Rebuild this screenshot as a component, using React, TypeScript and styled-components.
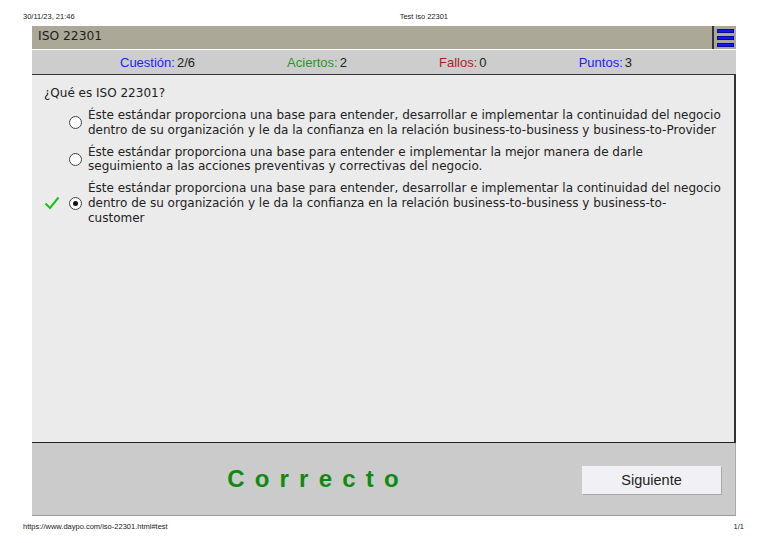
import styled, { createGlobalStyle } from "styled-components";

const GlobalStyle = createGlobalStyle`
  html, body {
    margin: 0;
    padding: 0;
    background: #ffffff;
  }
`;

const Page = styled.div`
  width: 768px;
  height: 543px;
  display: flex;
  flex-direction: column;
  font-family: "DejaVu Sans", Verdana, sans-serif;
  color: #222;
`;

const PrintLine = styled.div<{ $h: number; $top?: number }>`
  height: ${(p) => p.$h}px;
  box-sizing: border-box;
  padding: ${(p) => p.$top ?? 0}px 24px 0 23px;
  display: flex;
  align-items: center;
  justify-content: space-between;
  font-family: "Liberation Sans", Arial, sans-serif;
  font-size: 7.5px;
  color: #222;
`;

const PrintTitle = styled.span`
  margin-right: 296px;
`;

const Sheet = styled.div`
  width: 704px;
  margin-left: 32px;
  display: flex;
  flex-direction: column;
`;

const TitleBar = styled.div`
  height: 23px;
  background: #aba897;
  display: flex;
  align-items: center;
  justify-content: space-between;
`;

const Title = styled.h1`
  margin: 0 0 3px 6px;
  font-size: 12.3px;
  font-weight: normal;
  color: #1e1e1e;
`;

const MenuButton = styled.div`
  height: 23px;
  width: 22px;
  border-left: 2px solid #333;
  display: flex;
  flex-direction: column;
  justify-content: center;
  align-items: center;
  gap: 3px;
`;

const MenuBar = styled.span`
  width: 15px;
  height: 2px;
  background: #1414ff;
  border: 1px solid #0a0a9a;
`;

const StatsBar = styled.div`
  height: 24px;
  margin-top: 1px;
  background: #cdcdcd;
  border-bottom: 1px solid #333;
  display: flex;
  align-items: center;
  justify-content: space-between;
  padding: 0 104px 0 88px;
  font-family: "Liberation Sans", Arial, sans-serif;
  font-size: 13px;
`;

const Stat = styled.span`
  color: #222;
`;

const StatLabel = styled.span<{ $color: string }>`
  color: ${(p) => p.$color};
  margin-right: 2px;
`;

const Content = styled.div`
  height: 368px;
  background: #ebebeb;
  border-right: 2px solid #333;
  border-bottom: 1px solid #222;
  box-sizing: border-box;
  padding: 11px 0 0 12px;
`;

const Question = styled.p`
  margin: 0 0 8px 0;
  font-size: 12px;
`;

const AnswerList = styled.div`
  display: flex;
  flex-direction: column;
  gap: 7px;
`;

const Answer = styled.div`
  display: flex;
  align-items: center;
`;

const Mark = styled.div`
  width: 22px;
  display: flex;
  justify-content: flex-start;
`;

const Radio = styled.span<{ $checked?: boolean }>`
  width: 11px;
  height: 11px;
  border: 1px solid #444;
  border-radius: 50%;
  background: #fff;
  margin: 0 6px 0 3px;
  display: flex;
  align-items: center;
  justify-content: center;
  flex-shrink: 0;
  &::after {
    content: "";
    width: 5px;
    height: 5px;
    border-radius: 50%;
    background: ${(p) => (p.$checked ? "#111" : "transparent")};
  }
`;

const AnswerText = styled.div`
  font-size: 12px;
  line-height: 14.8px;
  width: 640px;
`;

const AnswerLine = styled.span`
  display: block;
  white-space: nowrap;
`;

const BottomBar = styled.div`
  height: 72px;
  background: #cbcbcb;
  border-bottom: 1px solid #9a9a9a;
  border-right: 1px solid #aaa;
  display: flex;
  align-items: center;
`;

const Verdict = styled.div`
  flex: 1;
  text-align: center;
  padding-left: 22px;
  font-family: "Liberation Sans", Arial, sans-serif;
  font-weight: bold;
  font-size: 24px;
  letter-spacing: 10.2px;
  color: #0e8a0e;
`;

const NextButton = styled.button`
  width: 139px;
  height: 28px;
  margin-right: 14px;
  margin-top: 2px;
  background: #f1f1f5;
  border: none;
  box-shadow: 1px 1px 0 #a8a8a8;
  font-family: "Liberation Sans", Arial, sans-serif;
  font-size: 14.5px;
  color: #222;
`;

const Check = () => (
  <svg width="16" height="14" viewBox="0 0 16 14">
    <path d="M1.5 7.5 L6 12 L14.5 1.5" fill="none" stroke="#19c219" strokeWidth="2" />
  </svg>
);

// lines as they wrap in the printed page
const answers = [
  {
    lines: [
      "Éste estándar proporciona una base para entender, desarrollar e implementar la continuidad del negocio",
      "dentro de su organización y le da la confianza en la relación business-to-business y business-to-Provider",
    ],
  },
  {
    lines: [
      "Éste estándar proporciona una base para entender e implementar la mejor manera de darle",
      "seguimiento a las acciones preventivas y correctivas del negocio.",
    ],
  },
  {
    lines: [
      "Éste estándar proporciona una base para entender, desarrollar e implementar la continuidad del negocio",
      "dentro de su organización y le da la confianza en la relación business-to-business y business-to-",
      "customer",
    ],
    checked: true,
  },
];

export default function App() {
  return (
    <>
      <GlobalStyle />
      <Page>
        <PrintLine $h={26} $top={6}>
          <span>30/11/23, 21:46</span>
          <PrintTitle>Test iso 22301</PrintTitle>
        </PrintLine>
        <Sheet>
          <TitleBar>
            <Title>ISO 22301</Title>
            <MenuButton>
              <MenuBar />
              <MenuBar />
              <MenuBar />
            </MenuButton>
          </TitleBar>
          <StatsBar>
            <Stat><StatLabel $color="#2323ee">Cuestión:</StatLabel>2/6</Stat>
            <Stat><StatLabel $color="#1f9a1f">Aciertos:</StatLabel>2</Stat>
            <Stat><StatLabel $color="#b01c1c">Fallos:</StatLabel>0</Stat>
            <Stat><StatLabel $color="#2323ee">Puntos:</StatLabel>3</Stat>
          </StatsBar>
          <Content>
            <Question>¿Qué es ISO 22301?</Question>
            <AnswerList>
              {answers.map((a, i) => (
                <Answer key={i}>
                  <Mark>{a.checked && <Check />}</Mark>
                  <Radio $checked={a.checked} />
                  <AnswerText>
                    {a.lines.map((l, j) => (
                      <AnswerLine key={j}>{l}</AnswerLine>
                    ))}
                  </AnswerText>
                </Answer>
              ))}
            </AnswerList>
          </Content>
          <BottomBar>
            <Verdict>Correcto</Verdict>
            <NextButton>Siguiente</NextButton>
          </BottomBar>
        </Sheet>
        <PrintLine $h={20}>
          <span>https://www.daypo.com/iso-22301.html#test</span>
          <span>1/1</span>
        </PrintLine>
      </Page>
    </>
  );
}
